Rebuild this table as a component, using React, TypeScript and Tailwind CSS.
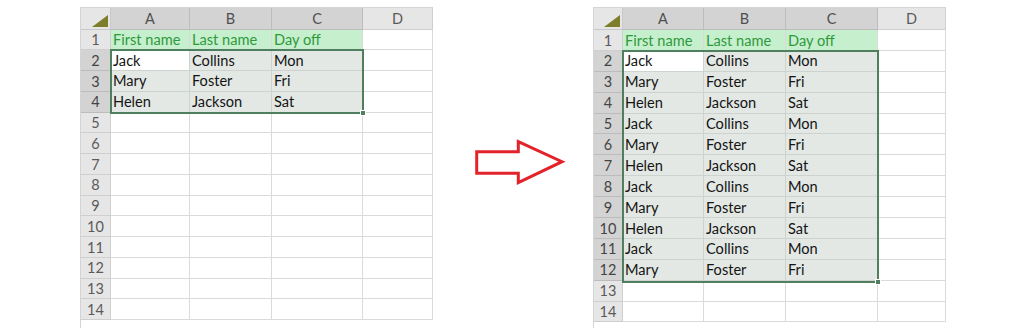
import React from "react";

type Row = [string, string, string];

const NAMES: Row[] = [
  ["Jack", "Collins", "Mon"],
  ["Mary", "Foster", "Fri"],
  ["Helen", "Jackson", "Sat"],
];

const font = { fontFamily: "Lato, 'Noto Sans', sans-serif" };

type SheetProps = {
  rows: Row[];
  cols: [string, string, string, string, string];
  headH: string;
  rowH: string;
  overlay: string;
};

function Corner({ w, h }: { w: string; h: string }) {
  return (
    <div className={`${w} ${h} shrink-0 relative bg-[#e6e6e6] border-r border-b border-[#c8c8c8]`}>
      <svg className="absolute right-[2px] bottom-[2px]" width="16" height="12" viewBox="0 0 16 12">
        <polygon points="16,0 16,12 0,12" fill="#7d7d2c" />
      </svg>
    </div>
  );
}

function Sheet({ rows, cols, headH, rowH, overlay }: SheetProps) {
  const [wH, wA, wB, wC, wD] = cols;
  const last = rows.length + 1;
  const lines = Array.from({ length: 14 }, (_, i) => i + 1);

  return (
    <div className="relative border-t border-l border-[#d4d4d4] text-[14.5px]" style={font}>
      <div className="flex">
        <Corner w={wH} h={headH} />
        {(["A", "B", "C"] as const).map((l, i) => (
          <div
            key={l}
            className={`${[wA, wB, wC][i]} ${headH} shrink-0 flex items-center justify-center pt-[1px] bg-[#d3d3d3] text-[#505050] border-r border-b border-[#bcbcbc]`}
          >
            {l}
          </div>
        ))}
        <div className={`${wD} ${headH} shrink-0 flex items-center justify-center pt-[1px] bg-[#e6e6e6] text-[#5a5a5a] border-r border-b border-[#cfcfcf]`}>
          D
        </div>
      </div>

      {lines.map((n) => {
        const sel = n >= 2 && n <= last;
        const data = n === 1 ? (["First name", "Last name", "Day off"] as Row) : sel ? rows[n - 2] : null;
        const first =
          n === 1 ? "bg-[#c6efce] text-[#2e9a3c]" : n === 2 ? "bg-white text-[#141414]" : sel ? "bg-[#e3e8e4] text-[#141414]" : "bg-white";
        const rest = n === 1 ? first : sel ? "bg-[#e3e8e4] text-[#141414]" : "bg-white";
        return (
          <div key={n} className="flex">
            <div
              className={`${wH} ${rowH} shrink-0 flex items-center justify-center pt-[1px] border-r border-b ${
                sel ? "bg-[#d3d3d3] text-[#444] border-[#bcbcbc]" : "bg-[#e6e6e6] text-[#5a5a5a] border-[#cfcfcf]"
              }`}
            >
              {n}
            </div>
            {[wA, wB, wC].map((w, i) => (
              <div
                key={i}
                className={`${w} ${rowH} shrink-0 flex items-center pl-[2px] pt-[1px] text-[14.6px] border-r border-b whitespace-nowrap overflow-hidden ${
                  i === 0 ? first : rest
                } ${sel ? "border-[#cdd3ce]" : "border-[#dadada]"}`}
              >
                {data ? data[i] : ""}
              </div>
            ))}
            <div className={`${wD} ${rowH} shrink-0 bg-white border-r border-b border-[#dadada]`} />
          </div>
        );
      })}

      <div className={`absolute border-2 border-[#4f7f5e] pointer-events-none ${overlay}`}>
        <div className="absolute -right-[4px] -bottom-[4px] w-[6px] h-[6px] bg-[#4f7f5e] border border-white" />
      </div>
    </div>
  );
}

export default function App() {
  const many: Row[] = Array.from({ length: 11 }, (_, i) => NAMES[i % 3]);

  return (
    <div className="w-[1024px] h-[328px] bg-white flex pt-[7px] pl-[80px] overflow-hidden">
      <Sheet
        rows={NAMES}
        cols={["w-[30px]", "w-[79px]", "w-[82px]", "w-[91px]", "w-[70px]"]}
        headH="h-[21.5px]"
        rowH="h-[20.75px]"
        overlay="left-[29px] top-[41.25px] w-[254px] h-[64.25px]"
      />
      <svg width="160" height="321" viewBox="0 0 160 321" className="shrink-0">
        <polygon
          points="43.7,144.7 85.3,144.7 85.3,134.7 129,154.7 85.3,175.7 85.3,166.3 43.7,166.3"
          fill="white"
          stroke="#e3232a"
          strokeWidth="3"
          strokeLinejoin="miter"
        />
      </svg>
      <Sheet
        rows={many}
        cols={["w-[29px]", "w-[81px]", "w-[82px]", "w-[92px]", "w-[68px]"]}
        headH="h-[22px]"
        rowH="h-[20.9px]"
        overlay="left-[28px] top-[41.9px] w-[257px] h-[232.9px]"
      />
    </div>
  );
}
